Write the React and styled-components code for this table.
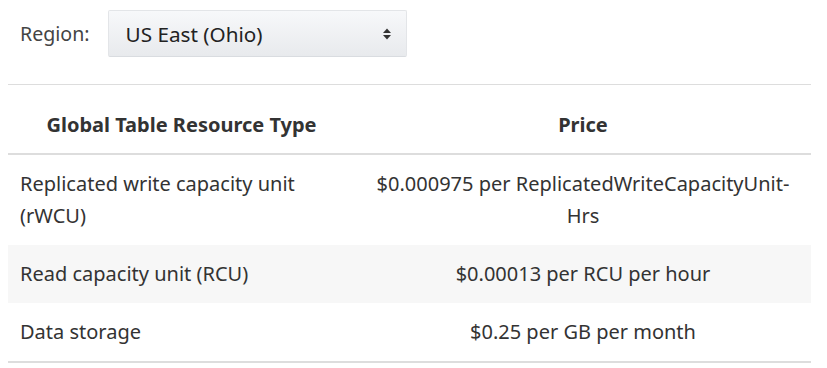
import styled, { createGlobalStyle } from "styled-components";

const GlobalStyle = createGlobalStyle`
  body {
    margin: 8px;
    background: #fff;
    font-family: "Noto Sans", "Open Sans", sans-serif;
    color: #333;
  }
`;

const rows = [
  {
    id: 1,
    type: ["Replicated write capacity unit", "(rWCU)"],
    price: ["$0.000975 per ReplicatedWriteCapacityUnit-", "Hrs"],
  },
  { id: 2, type: ["Read capacity unit (RCU)"], price: ["$0.00013 per RCU per hour"] },
  { id: 3, type: ["Data storage"], price: ["$0.25 per GB per month"] },
];

export default function App() {
  return (
    <>
      <GlobalStyle />
      <Wrapper>
        <RegionBar>
          <RegionLabel>Region:</RegionLabel>
          <SelectBox>
            <span>US East (Ohio)</span>
            <svg width="10" height="14" viewBox="0 0 10 14">
              <path d="M5 1.5 L9 6 H1 Z" fill="#333" />
              <path d="M5 12.5 L9 8 H1 Z" fill="#333" />
            </svg>
          </SelectBox>
        </RegionBar>
        <PriceTable>
          <colgroup>
            <col style={{ width: "347px" }} />
            <col />
          </colgroup>
          <thead>
            <tr>
              <HeadCell>Global Table Resource Type</HeadCell>
              <HeadCell>Price</HeadCell>
            </tr>
          </thead>
          <tbody>
            {rows.map((row, i) => (
              <Row key={row.id} shaded={i % 2 === 1}>
                <TypeCell>
                  {row.type.map((t, j) => (
                    <span key={j}>
                      {j > 0 && <br />}
                      {t}
                    </span>
                  ))}
                </TypeCell>
                <PriceCell>
                  {row.price.map((t, j) => (
                    <span key={j}>
                      {j > 0 && <br />}
                      {t}
                    </span>
                  ))}
                </PriceCell>
              </Row>
            ))}
          </tbody>
        </PriceTable>
      </Wrapper>
    </>
  );
}

const Wrapper = styled.div`
  width: 803px;
`;

const RegionBar = styled.div`
  display: flex;
  align-items: center;
  gap: 18px;
  padding: 2px 0 0 12px;
  height: 47px;
  margin-bottom: 27px;
`;

const RegionLabel = styled.span`
  font-size: 19.6px;
  color: #444;
`;

const SelectBox = styled.div`
  box-sizing: border-box;
  width: 299px;
  height: 47px;
  display: flex;
  align-items: center;
  justify-content: space-between;
  padding: 0 14px 0 17px;
  border: 1px solid #e3e5e8;
  border-bottom-color: #d9dce0;
  border-radius: 2px;
  background: linear-gradient(#f7f8fa, #e8eaed);
  font-size: 20.7px;
  color: #222;
`;

const PriceTable = styled.table`
  width: 100%;
  border-collapse: collapse;
  table-layout: fixed;
  border-top: 1px solid #ddd;
  border-bottom: 2px solid #ddd;
  font-size: 20px;
  line-height: 32px;
`;

const HeadCell = styled.th`
  padding: 24px 12px 12px;
  font-weight: 700;
  text-align: center;
  color: #333;
  border-bottom: 2px solid #ddd;
`;

const Row = styled.tr`
  background: ${({ shaded }) => (shaded ? "#f7f7f7" : "#fff")};
`;

const TypeCell = styled.td`
  padding: 13px 12px;
  text-align: left;
  color: #333;
`;

const PriceCell = styled.td`
  padding: 13px 12px;
  text-align: center;
  color: #333;
`;
